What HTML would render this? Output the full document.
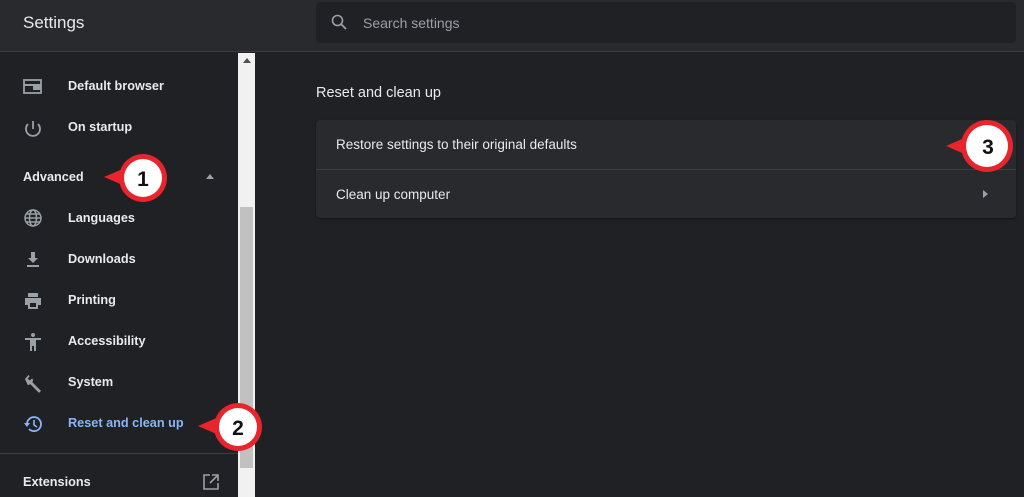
<!DOCTYPE html>
<html><head><style>
*{margin:0;padding:0;box-sizing:border-box}
body{width:1024px;height:497px;background:#202124;font-family:"Liberation Sans",sans-serif;overflow:hidden;position:relative;color:#e8eaed}
.hdr{position:absolute;left:0;top:0;width:1024px;height:52px;background:#292a2d;border-bottom:1px solid #3c3d40}
.hdr .t{position:absolute;left:23px;top:13px;font-size:17px;color:#e8eaed}
.search{position:absolute;left:316px;top:2px;width:700px;height:41px;background:#202124;border-radius:4px}
.search span{position:absolute;left:47px;top:13px;font-size:14px;color:#9aa0a6}
.side{position:absolute;left:0;top:53px;width:238px;height:444px;background:#202124}
.item{position:absolute;left:68px;font-size:12.7px;font-weight:bold;color:#e8eaed}
.ic{position:absolute;left:23px}
.sb{position:absolute;left:238px;top:53px;width:17px;height:444px;background:#f1f1f1}
.thumb{position:absolute;left:240px;top:207px;width:13px;height:261px;background:#c1c1c1}
.main{position:absolute;left:256px;top:53px;width:768px;height:444px;background:#202124}
.card{position:absolute;left:316px;top:120px;width:700px;height:98px;background:#292a2d;border-radius:4px;box-shadow:0 1px 2px rgba(0,0,0,.4)}
.row{position:absolute;left:20px;font-size:13.5px;color:#e8eaed}
</style></head><body>
<div class="hdr"><div class="t">Settings</div>
<div class="search"><svg style="position:absolute;left:15px;top:12px" width="16" height="16" viewBox="0 0 16 16"><circle cx="6.5" cy="6.5" r="5" fill="none" stroke="#9aa0a6" stroke-width="1.6"/><path d="M10 10l5 5" stroke="#9aa0a6" stroke-width="1.8"/></svg><span>Search settings</span></div></div>
<div class="side">
<svg class="ic" style="top:26px" width="20" height="16" viewBox="0 0 20 16"><rect x="1" y="1" width="17" height="13" fill="none" stroke="#9aa0a6" stroke-width="1.8"/><rect x="1" y="5" width="17" height="2" fill="#9aa0a6"/><rect x="10" y="7" width="8" height="4" fill="#9aa0a6"/></svg>
<div class="item" style="top:26px">Default browser</div>
<svg class="ic" style="top:66px" width="20" height="20" viewBox="0 0 20 20"><path d="M5 5a7 7 0 1 0 10 0" fill="none" stroke="#9aa0a6" stroke-width="1.8"/><path d="M10 2v8" stroke="#9aa0a6" stroke-width="1.8"/></svg>
<div class="item" style="top:67px">On startup</div>
<div class="item" style="left:23px;top:117px;color:#e8eaed">Advanced</div>
<div style="position:absolute;left:206px;top:121px;border:4px solid transparent;border-bottom:5px solid #9aa0a6;border-top:0"></div>
<svg class="ic" style="top:155px" width="20" height="20" viewBox="0 0 20 20"><g fill="none" stroke="#9aa0a6" stroke-width="1.5"><circle cx="10" cy="10" r="8"/><ellipse cx="10" cy="10" rx="3.5" ry="8"/><path d="M2 10h16M3.5 6h13M3.5 14h13"/></g></svg>
<div class="item" style="top:158px">Languages</div>
<svg class="ic" style="top:197px" width="20" height="20" viewBox="0 0 20 20"><path d="M8 2h4v6h3l-5 5-5-5h3zM4 15h12v2H4z" fill="#9aa0a6"/></svg>
<div class="item" style="top:199px">Downloads</div>
<svg class="ic" style="top:238px" width="20" height="20" viewBox="0 0 20 20"><path d="M5 2h10v4H5zM2 7h16v7h-3v4H5v-4H2zM7 12v4h6v-4z" fill="#9aa0a6"/></svg>
<div class="item" style="top:240px">Printing</div>
<svg class="ic" style="top:279px" width="20" height="20" viewBox="0 0 20 20"><circle cx="10" cy="3" r="2" fill="#9aa0a6"/><path d="M2 6h16v2h-5v11h-2v-5H9v5H7V8H2z" fill="#9aa0a6"/></svg>
<div class="item" style="top:281px">Accessibility</div>
<svg class="ic" style="top:320px" width="20" height="20" viewBox="0 0 20 20"><path d="M2 6l3.5-4 1.2 1.2-2 2.3 2 2 2.3-2 1.2 1.2-.8 2.6 8.6 8.6-2 2-8.6-8.6-2.6.8z" fill="#9aa0a6"/></svg>
<div class="item" style="top:322px">System</div>
<svg class="ic" style="top:361px" width="20" height="20" viewBox="0 0 20 20"><path d="M4 10a7 7 0 1 1 2 5" fill="none" stroke="#8ab4f8" stroke-width="1.8"/><path d="M1 9h6l-3 4z" fill="#8ab4f8"/><path d="M11 6v5l3 2" fill="none" stroke="#8ab4f8" stroke-width="1.6"/></svg>
<div class="item" style="top:363px;color:#8ab4f8">Reset and clean up</div>
<div style="position:absolute;left:0;top:400px;width:238px;height:1px;background:#3c3d40"></div>
<div class="item" style="left:23px;top:422px">Extensions</div>
<svg style="position:absolute;left:203px;top:421px" width="16" height="16" viewBox="0 0 16 16"><path d="M7 1H1v14h14V9" fill="none" stroke="#9aa0a6" stroke-width="1.6"/><path d="M9 1h6v6M15 1L7 9" fill="none" stroke="#9aa0a6" stroke-width="1.6"/></svg>
</div>
<div class="sb"></div><div class="thumb"></div>
<div style="position:absolute;left:243px;top:58px;border:4px solid transparent;border-bottom:5px solid #505050;border-top:0"></div>
<div class="main"></div>
<div style="position:absolute;left:316px;top:85px;font-size:14.5px;color:#e8eaed">Reset and clean up</div>
<div class="card">
<div class="row" style="top:17px">Restore settings to their original defaults</div>
<div style="position:absolute;left:0;top:49px;width:700px;height:1px;background:#3f4043"></div>
<div class="row" style="top:67px">Clean up computer</div>
<div style="position:absolute;left:667px;top:70px;border:4px solid transparent;border-left:5px solid #9aa0a6;border-right:0"></div>
</div>
<svg style="position:absolute;left:0;top:0" width="1024" height="497">
<g fill="#e8242c"><circle cx="143" cy="178" r="24"/><path d="M104 177l30-13v26z"/>
<circle cx="238" cy="427" r="24"/><path d="M198 426l30-13v26z"/>
<circle cx="987" cy="146" r="26"/><path d="M946 146l30-13v26z"/></g>
<g fill="#fff"><circle cx="143" cy="178" r="19"/><circle cx="238" cy="427" r="19"/><circle cx="987" cy="146" r="21"/></g>
<g font-family="Liberation Sans,sans-serif" font-weight="bold" font-size="21" fill="#111" text-anchor="middle">
<text x="143" y="186">1</text><text x="238" y="435">2</text><text x="988" y="154">3</text></g>
</svg>
</body></html>
